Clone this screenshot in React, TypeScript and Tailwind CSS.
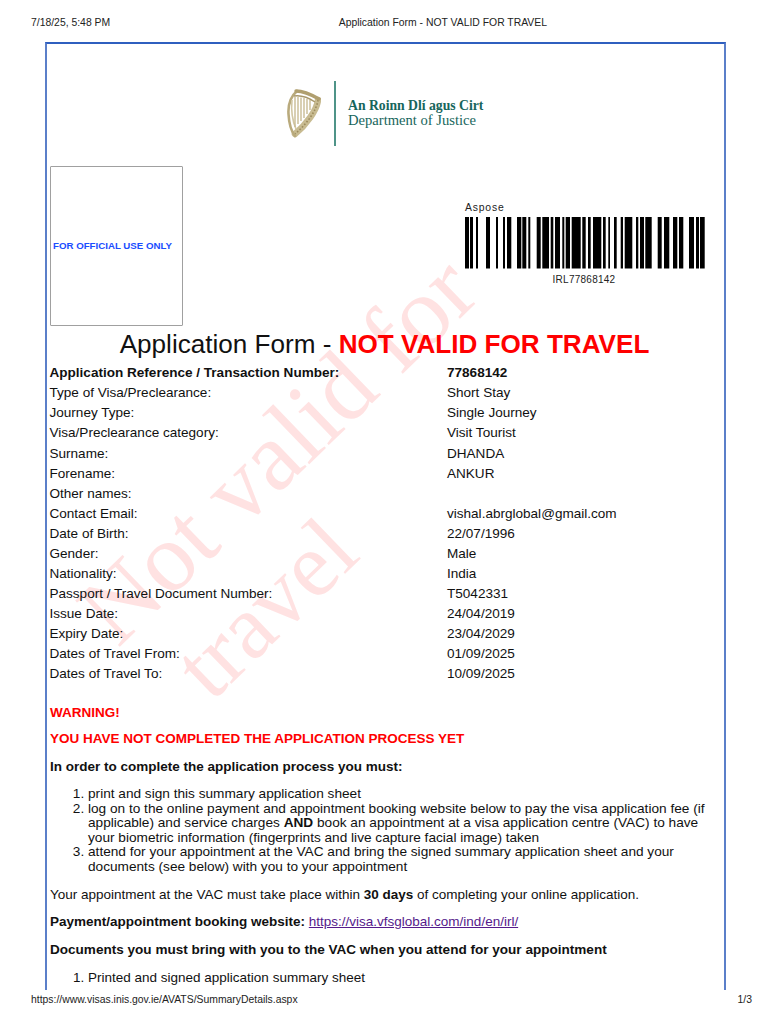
const bars: [number, number][] = [
  [466, 470], [471, 474], [477, 479], [487, 491], [497, 499], [504, 506], [508, 512.3], [518, 522.3],
  [523.3, 527.3], [529.3, 531.3], [537.7, 541.7], [543.3, 550], [551.7, 554.3], [556, 561], [563.3, 565.3],
  [566.7, 571], [572.7, 581.7], [583.3, 586.7], [589, 591.7], [594, 602.3], [604, 606.7], [609.3, 611],
  [615, 617.7], [621.7, 624], [625.7, 633.3], [637, 639.3], [641, 645], [646.3, 652.7], [658.7, 662.7],
  [665, 670.3], [674, 678.3], [680, 684.3], [690, 695], [697, 700], [701, 705.7],
];

const rows: [string, string][] = [
  ["Type of Visa/Preclearance:", "Short Stay"],
  ["Journey Type:", "Single Journey"],
  ["Visa/Preclearance category:", "Visit Tourist"],
  ["Surname:", "DHANDA"],
  ["Forename:", "ANKUR"],
  ["Other names:", ""],
  ["Contact Email:", "vishal.abrglobal@gmail.com"],
  ["Date of Birth:", "22/07/1996"],
  ["Gender:", "Male"],
  ["Nationality:", "India"],
  ["Passport / Travel Document Number:", "T5042331"],
  ["Issue Date:", "24/04/2019"],
  ["Expiry Date:", "23/04/2029"],
  ["Dates of Travel From:", "01/09/2025"],
  ["Dates of Travel To:", "10/09/2025"],
];

const Harp = () => (
  <svg width="34" height="50" viewBox="0 0 34 50" fill="none" className="shrink-0">
    <path d="M31 12C30 22 19 37 8 46" stroke="#c8bb91" strokeWidth="6.5" strokeLinecap="round" />
    <path d="M31 12C30 22 19 37 8 46" stroke="#9c8b5c" strokeWidth="1.6" strokeDasharray="1.6 1.8" />
    <path d="M10 3C3 9 1 17 1.5 26C2 35 4 43 8 48" stroke="#b9aa7c" strokeWidth="2.6" strokeLinecap="round" />
    <path d="M5 12C4 22 6 34 9 41" stroke="#d2c7a4" strokeWidth="1.6" />
    <path d="M9 3C16 3 25 7 32 11" stroke="#b09f6f" strokeWidth="3.4" strokeLinecap="round" />
    <path d="M8 9V39M11 9V36M14 9.5V33M17 10V30M20 11V26M23 12V22" stroke="#c9bc94" strokeWidth="1.4" />
    <path d="M7 8C14 7 22 10 28 14" stroke="#a8976a" strokeWidth="1.4" />
  </svg>
);

export default function App() {
  return (
    <div className="w-[768px] h-[1024px] overflow-hidden bg-white text-black font-['Liberation_Sans',Arial,sans-serif] flex flex-col">
      <div className="h-[42px] shrink-0 pt-[16px] pl-[31px] pr-[221px] flex justify-between text-[10.4px] leading-[14px] text-[#222]">
        <span>7/18/25, 5:48 PM</span>
        <span>Application Form - NOT VALID FOR TRAVEL</span>
      </div>

      <div className="relative ml-[45px] w-[681px] h-[948px] shrink-0 overflow-hidden border-x-2 border-t-2 border-x-[#5b7fc9] border-t-[#2f5fbf] pl-[3px]">
        <div className="absolute left-[-47px] top-[-44px] w-[768px] h-[1024px] pointer-events-none">
          <div className="absolute left-[58px] top-[587px] origin-top-left -rotate-[44deg] whitespace-nowrap font-['Liberation_Serif',serif] leading-[106px] text-[#ffe2e2]">
            <span className="block text-[98px]">Not valid for</span>
            <span className="block text-[92px] ml-[30px]">travel</span>
          </div>
        </div>

        <div className="relative">
          <div className="h-[36px]" />
          <div className="h-[66px] flex items-center">
            <div className="ml-[237px]"><Harp /></div>
            <div className="ml-[13px] w-[2px] h-[65px] bg-[#4f9488]" />
            <div className="ml-[12px] font-['Liberation_Serif',serif] text-[#17665c] leading-[15px] -mt-[1px]">
              <div className="font-bold text-[13.7px]">An Roinn Dlí agus Cirt</div>
              <div className="text-[14.6px]">Department of Justice</div>
            </div>
          </div>

          <div className="h-[20px]" />
          <div className="h-[160px] flex">
            <div className="w-[133px] h-[160px] border border-[#a0a0a0] rounded-[1px] flex items-center pl-[2px] shrink-0">
              <span className="text-[9.7px] font-bold text-[#1a4dff] whitespace-nowrap">FOR OFFICIAL USE ONLY</span>
            </div>
            <div className="ml-[281px] flex flex-col w-[242px]">
              <div className="mt-[35px] ml-[1px] text-[10.4px] leading-[13px] tracking-[0.8px] text-[#222]">Aspose</div>
              <svg width="242" height="52" viewBox="465 217 242 52" className="mt-[3px]">
                {bars.map(([a, b]) => (
                  <rect key={a} x={a} y="217" width={b - a} height="51.5" fill="#000" />
                ))}
              </svg>
              <div className="text-center text-[10px] leading-[13px] tracking-[0.25px] text-[#222] -ml-[2px] mt-[4px]">IRL77868142</div>
            </div>
          </div>

          <div className="h-[38px] flex items-center justify-center text-[26.1px] pr-[5px] whitespace-nowrap">
            <span className="text-[#111]">Application Form -&nbsp;</span>
            <span className="font-bold text-[#ff0000]">NOT VALID FOR TRAVEL</span>
          </div>

          <div className="grid grid-cols-[397.5px_1fr] -ml-[0.5px] text-[13.55px] leading-[20px] text-[#111] mt-[-1px]">
            <div className="font-bold">Application Reference / Transaction Number:</div>
            <div className="font-bold">77868142</div>
            {rows.map(([k, v]) => (
              <div key={k} className="contents">
                <div className={k === "Surname:" ? "h-[20px] mt-[1px]" : "h-[20px]"}>{k}</div>
                <div className={k === "Surname:" ? "h-[20px] mt-[1px]" : "h-[20px]"}>{v}</div>
              </div>
            ))}
          </div>

          <div className="text-[13.5px] leading-[15px] text-[#111] pr-[8px]">
            <p className="mt-[21px] font-bold text-[#ff0000]">WARNING!</p>
            <p className="mt-[11px] font-bold text-[#ff0000]">YOU HAVE NOT COMPLETED THE APPLICATION PROCESS YET</p>
            <p className="mt-[13px] font-bold">In order to complete the application process you must:</p>
            <ol className="mt-[13px] pl-[38px] list-decimal text-[13.65px] leading-[14.6px]">
              <li>print and sign this summary application sheet</li>
              <li>log on to the online payment and appointment booking website below to pay the visa application fee (if applicable) and service charges <b>AND</b> book an appointment at a visa application centre (VAC) to have your biometric information (fingerprints and live capture facial image) taken</li>
              <li>attend for your appointment at the VAC and bring the signed summary application sheet and your documents (see below) with you to your appointment</li>
            </ol>
            <p className="mt-[12px]">Your appointment at the VAC must take place within <b>30 days</b> of completing your online application.</p>
            <p className="mt-[12px]"><b>Payment/appointment booking website:</b> <a className="text-[#551a8b] underline">https://visa.vfsglobal.com/ind/en/irl/</a></p>
            <p className="mt-[13px] font-bold text-[13.55px]">Documents you must bring with you to the VAC when you attend for your appointment</p>
            <ol className="mt-[13px] pl-[38px] list-decimal">
              <li>Printed and signed application summary sheet</li>
            </ol>
          </div>
        </div>
      </div>

      <div className="h-[34px] shrink-0 pl-[31px] pr-[16px] pt-[3px] flex justify-between text-[10.4px] leading-[14px] text-[#222]">
        <span>https://www.visas.inis.gov.ie/AVATS/SummaryDetails.aspx</span>
        <span>1/3</span>
      </div>
    </div>
  );
}
